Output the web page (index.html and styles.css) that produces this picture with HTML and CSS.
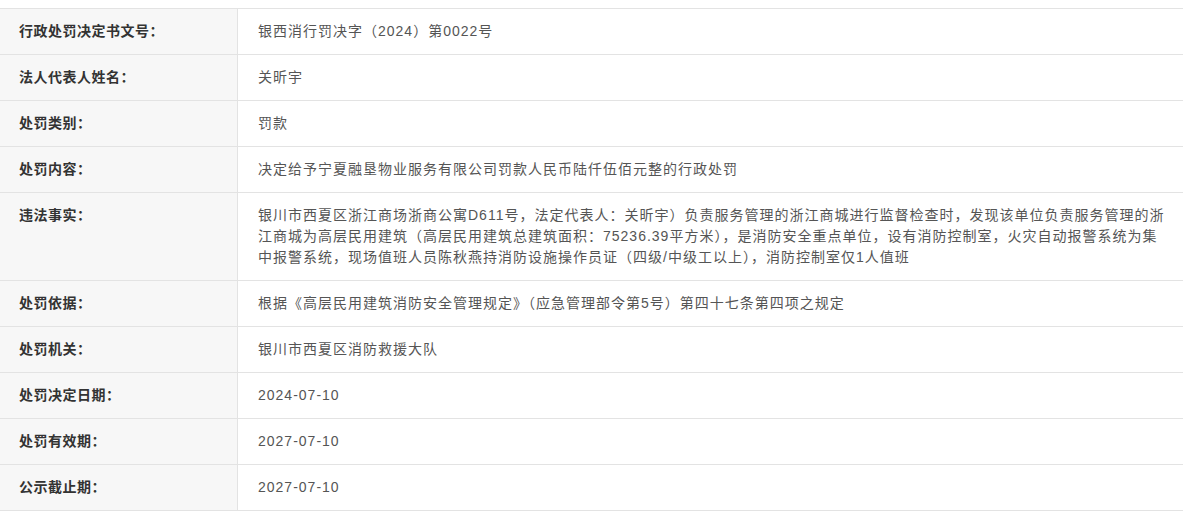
FILE: index.html
```html
<!DOCTYPE html>
<html lang="zh-CN">
<head>
    <meta charset="UTF-8">
    <meta name="viewport" content="width=device-width, initial-scale=1.0">
    <title>行政处罚决定书</title>
    <link rel="stylesheet" href="styles.css">
</head>
<body>
    <table class="info-table">
        <tr>
            <th>行政处罚决定书文号：</th>
            <td>银西消行罚决字（2024）第0022号</td>
        </tr>
        <tr>
            <th>法人代表人姓名：</th>
            <td>关昕宇</td>
        </tr>
        <tr>
            <th>处罚类别：</th>
            <td>罚款</td>
        </tr>
        <tr>
            <th>处罚内容：</th>
            <td>决定给予宁夏融垦物业服务有限公司罚款人民币陆仟伍佰元整的行政处罚</td>
        </tr>
        <tr>
            <th>违法事实：</th>
            <td>银川市西夏区浙江商场浙商公寓D611号，法定代表人：关昕宇）负责服务管理的浙江商城进行监督检查时，发现该单位负责服务管理的浙江商城为高层民用建筑（高层民用建筑总建筑面积：75236.39平方米），是消防安全重点单位，设有消防控制室，火灾自动报警系统为集中报警系统，现场值班人员陈秋燕持消防设施操作员证（四级/中级工以上），消防控制室仅1人值班</td>
        </tr>
        <tr>
            <th>处罚依据：</th>
            <td>根据《高层民用建筑消防安全管理规定》（应急管理部令第5号）第四十七条第四项之规定</td>
        </tr>
        <tr>
            <th>处罚机关：</th>
            <td>银川市西夏区消防救援大队</td>
        </tr>
        <tr>
            <th>处罚决定日期：</th>
            <td>2024-07-10</td>
        </tr>
        <tr>
            <th>处罚有效期：</th>
            <td>2027-07-10</td>
        </tr>
        <tr>
            <th>公示截止期：</th>
            <td>2027-07-10</td>
        </tr>
    </table>
</body>
</html>
```

FILE: styles.css
```css
body {
    margin: 8px 0;
    font-family: Arial, "Liberation Sans", "Noto Sans CJK SC", sans-serif;
    font-size: 14px;
    background: #fff;
}

.info-table {
    width: 100%;
    border-collapse: collapse;
    table-layout: fixed;
}

.info-table tr {
    border-top: 1px solid #e3e3e3;
    border-bottom: 1px solid #e3e3e3;
}

.info-table th,
.info-table td {
    padding: 12px 20px 12px 19px;
    line-height: 21px;
    vertical-align: top;
    text-align: left;
}

/* label column */
.info-table th {
    width: 198px;
    background-color: #f7f7f7;
    border-right: 1px solid #e3e3e3;
    color: #333;
    font-weight: bold;
    letter-spacing: 0.5px;
}

.info-table td {
    padding-left: 20px;
    padding-right: 16px;
    color: #555;
    letter-spacing: 1px;
}
```
